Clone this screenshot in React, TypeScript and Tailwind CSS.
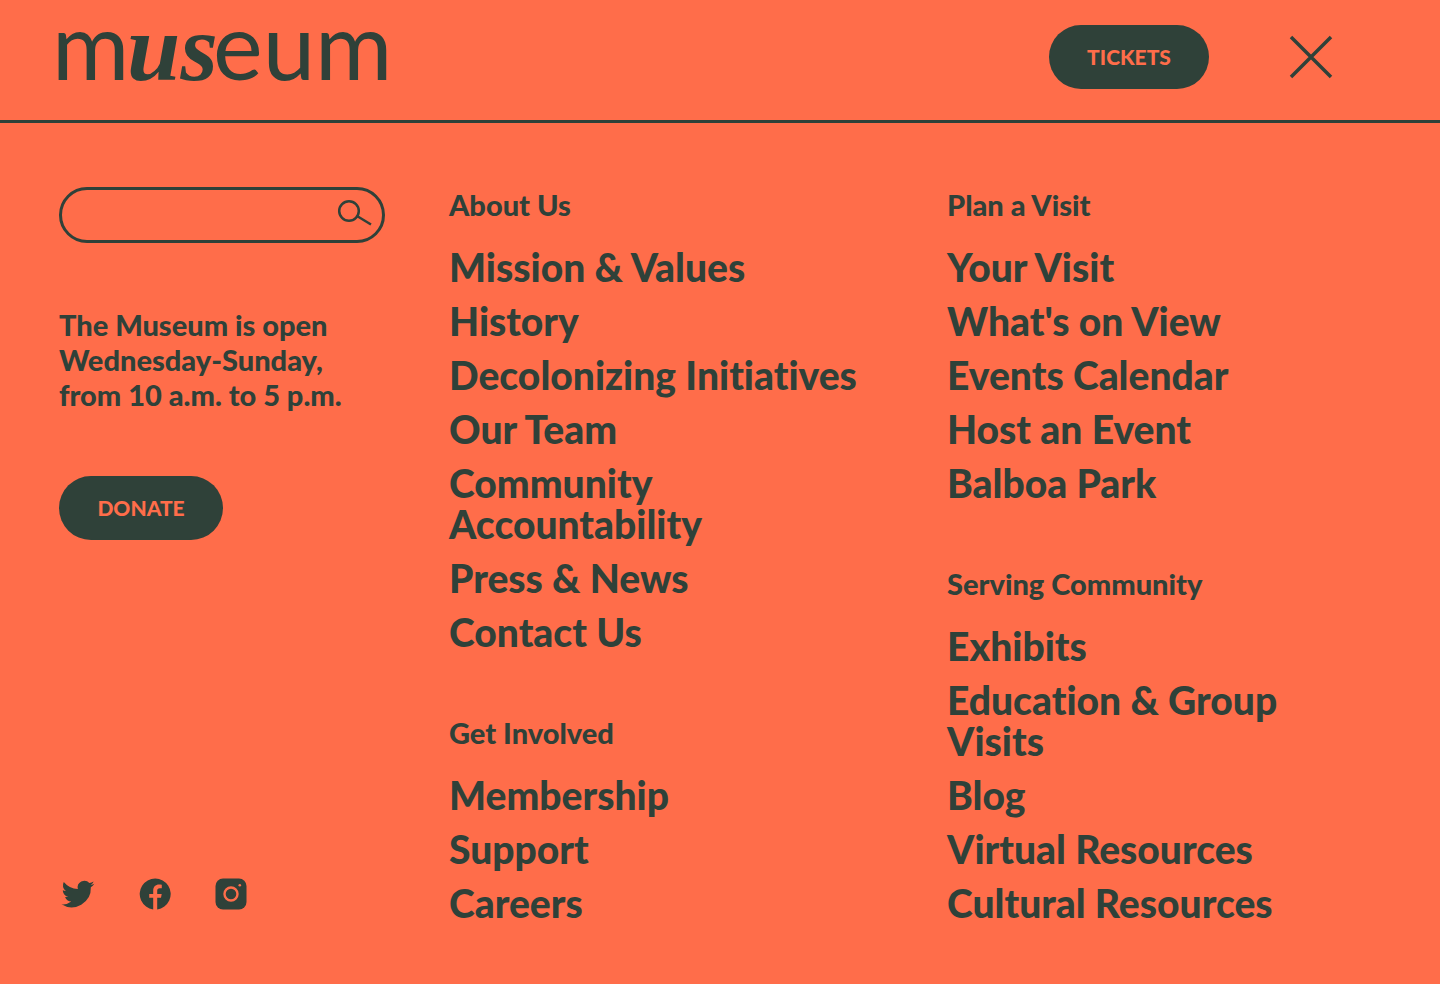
import React from "react";

type MenuSection = {
  title: string;
  links: string[];
};

const aboutColumn: MenuSection[] = [
  {
    title: "About Us",
    links: [
      "Mission & Values",
      "History",
      "Decolonizing Initiatives",
      "Our Team",
      "Community Accountability",
      "Press & News",
      "Contact Us",
    ],
  },
  { title: "Get Involved", links: ["Membership", "Support", "Careers"] },
];

const visitColumn: MenuSection[] = [
  {
    title: "Plan a Visit",
    links: ["Your Visit", "What's on View", "Events Calendar", "Host an Event", "Balboa Park"],
  },
  {
    title: "Serving Community",
    links: ["Exhibits", "Education & Group Visits", "Blog", "Virtual Resources", "Cultural Resources"],
  },
];

function MenuColumn({ sections }: { sections: MenuSection[] }) {
  return (
    <div className="flex flex-col gap-[62px]">
      {sections.map((section) => (
        <section key={section.title}>
          <h2 className="mb-[25px] text-[29px] leading-[35px] font-black">{section.title}</h2>
          <ul className="flex flex-col gap-[13px] pr-3">
            {section.links.map((link) => (
              <li key={link} className="text-[39px] leading-[41px] font-black">
                <a href="#" className="hover:underline">{link}</a>
              </li>
            ))}
          </ul>
        </section>
      ))}
    </div>
  );
}

function Logo() {
  return (
    <svg viewBox="0 0 326 64" className="h-16 w-[326px] overflow-visible" fill="currentColor" aria-hidden="true">
      <text x="-7" y="55" className="font-[Lato,sans-serif] text-[94px]">m</text>
      <text x="68" y="55" className="font-['Liberation_Serif',serif] text-[96px] font-bold italic">us</text>
      <text x="154" y="55" className="font-[Lato,sans-serif] text-[94px]">eum</text>
    </svg>
  );
}

function TwitterIcon() {
  return (
    <svg viewBox="0.5 0.5 22.5 22.5" className="size-9" fill="currentColor" aria-hidden="true">
      <path d="M22.6 5.4c-.7.3-1.5.6-2.3.7.8-.5 1.5-1.3 1.8-2.2-.8.5-1.7.8-2.6 1a4.2 4.2 0 0 0-7.2 3.8A12 12 0 0 1 3.500 4.300a4.200 4.200 0 0 0 1.300 5.600c-.7 0-1.300-.2-1.900-.5 0 2 1.400 3.700 3.300 4.100-.6.2-1.200.2-1.900.1.5 1.600 2 2.800 3.900 2.900A8.500 8.500 0 0 1 2 18.200a12 12 0 0 0 18.400-10.600c.9-.6 1.600-1.300 2.200-2.200Z" />
    </svg>
  );
}

function FacebookIcon() {
  return (
    <svg viewBox="0 0 32 32" className="size-8" fill="currentColor" aria-hidden="true">
      <path d="M14.2 31.4V19.8h-4v-3.9h4v-3.2c0-4 2.4-6.2 5.9-6.2.9 0 1.8.1 2.7.2v3.500h-2c-2 0-2.600 1.100-2.600 2.400v3.300h4.500l-.7 3.900h-3.800v11.600A15.500 15.500 0 1 0 14.200 31.400Z" />
    </svg>
  );
}

function InstagramIcon() {
  return (
    <svg viewBox="0 0 32 32" className="size-8" aria-hidden="true">
      <rect x="0.5" y="0.5" width="31" height="31" rx="7.5" fill="currentColor" />
      <circle cx="16" cy="16" r="6.5" fill="none" stroke="#ff6d4a" strokeWidth="2.4" />
      <circle cx="24.8" cy="7.2" r="1.3" fill="#ff6d4a" />
    </svg>
  );
}

export default function App() {
  return (
    <div className="flex min-h-screen flex-col bg-[#ff6d4a] font-[Lato,sans-serif] text-[#2f4139] [font-variant-ligatures:none]">
      <header className="flex h-[123px] items-center justify-between border-b-[3px] border-[#2f4139] pr-[107px] pb-1.5 pl-[59px]">
        <a href="#" aria-label="museum">
          <Logo />
        </a>
        <div className="flex items-center gap-20">
          <a href="#" className="flex h-16 w-40 items-center justify-center rounded-full bg-[#2f4139] text-[21px] font-black text-[#ff6d4a]">
            TICKETS
          </a>
          <button type="button" aria-label="Close menu">
            <svg viewBox="0 0 44 44" className="size-11" fill="none" stroke="currentColor" strokeWidth="3.5" aria-hidden="true">
              <path d="M2 2l40 40M42 2L2 42" />
            </svg>
          </button>
        </div>
      </header>

      <main className="grid flex-1 grid-cols-[326px_1fr_1fr] gap-16 px-[59px] pt-16 pb-14">
        <div className="flex flex-col items-start">
          <form role="search" className="flex h-14 w-full items-center rounded-full border-[3px] border-[#2f4139] pr-2.5 pl-6">
            <input type="text" aria-label="Search" className="min-w-0 flex-1 bg-transparent text-[22px] outline-none" />
            <button type="submit" aria-label="Submit search">
              <svg viewBox="0 0 36 32" className="h-8 w-9" fill="none" stroke="currentColor" strokeWidth="2.5" aria-hidden="true">
                <circle cx="13" cy="12" r="9.8" />
                <path d="M21 17l14 8.500" />
              </svg>
            </button>
          </form>
          <p className="mt-16 text-[29px] leading-[35px] font-black">
            The Museum is open
            <br />
            Wednesday-Sunday,
            <br />
            from 10 a.m. to 5 p.m.
          </p>
          <a href="#" className="mt-16 flex h-16 w-[164px] items-center justify-center rounded-full bg-[#2f4139] text-[21px] font-black text-[#ff6d4a]">
            DONATE
          </a>
          <div className="mt-auto mb-4 flex items-center gap-11">
            <a href="#" aria-label="Twitter"><TwitterIcon /></a>
            <a href="#" aria-label="Facebook"><FacebookIcon /></a>
            <a href="#" aria-label="Instagram"><InstagramIcon /></a>
          </div>
        </div>
        <MenuColumn sections={aboutColumn} />
        <MenuColumn sections={visitColumn} />
      </main>
    </div>
  );
}
